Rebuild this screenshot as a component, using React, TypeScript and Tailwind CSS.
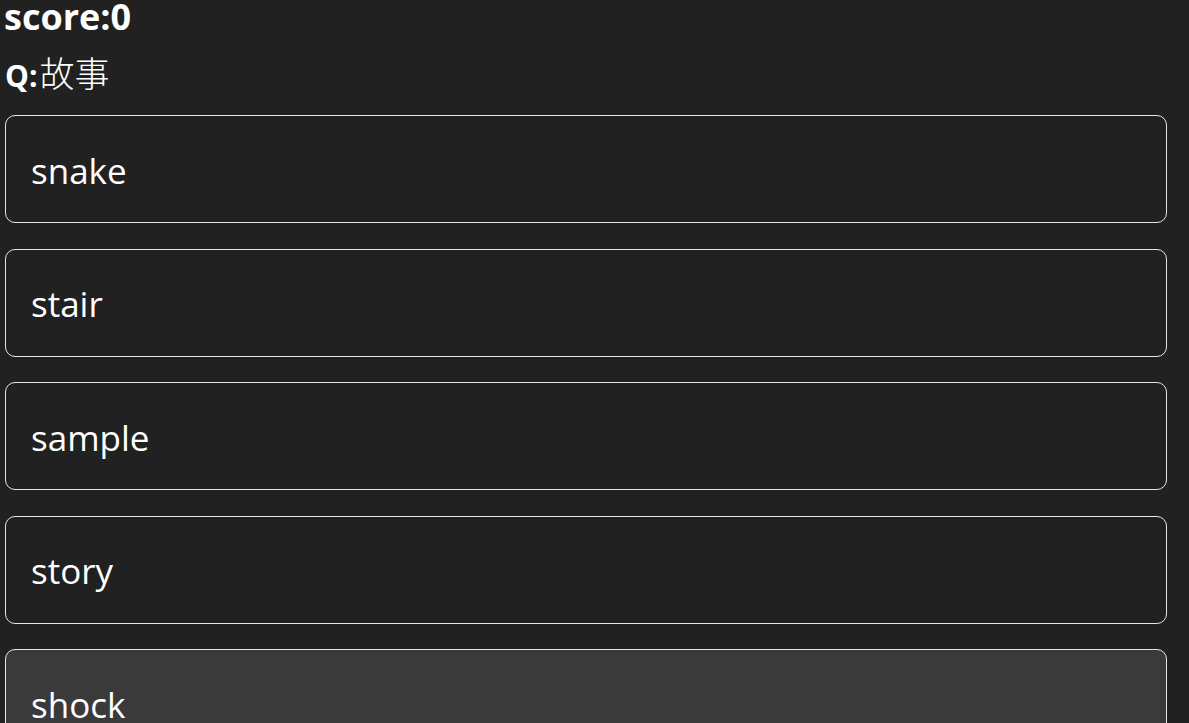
import React from "react";

const options = ["snake", "stair", "sample", "story", "shock"];

export default function App() {
  return (
    <div
      className="w-full min-h-[723px] h-[723px] overflow-hidden bg-[#212121] text-white"
      style={{ fontFamily: '"Open Sans", "Noto Sans CJK SC", sans-serif' }}
    >
      <div className="pl-[4px] text-[36px] font-bold leading-[34px] h-[33px]">score:0</div>
      <div className="pl-[5px] mt-[19px] h-[40px] leading-[40px] text-[30px] flex items-baseline">
        <span className="font-bold">Q:</span>
        <span className="text-[35px] font-light ml-[2px]" style={{ fontFamily: '"Noto Sans CJK SC", sans-serif' }}>
          故事
        </span>
      </div>
      <div className="mt-[23px] ml-[5px] w-[1162px] flex flex-col gap-[25.5px]">
        {options.map((o, i) => (
          <button
            key={o}
            className={`h-[108px] shrink-0 flex items-center pl-[25px] pt-[4px] rounded-[10px] border border-[#e6e6e6] text-[35px] text-white text-left ${
              i === 4 ? "bg-[#3a3a3a]" : "bg-[#212121]"
            }`}
            style={{ fontFamily: '"Open Sans", sans-serif' }}
          >
            {o}
          </button>
        ))}
      </div>
    </div>
  );
}
